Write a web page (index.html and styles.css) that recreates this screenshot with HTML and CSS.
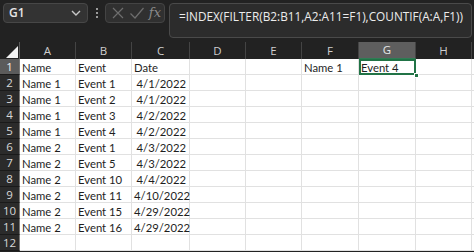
FILE: index.html
```html
<!DOCTYPE html>
<html>
<head>
<meta charset="utf-8">
<link rel="stylesheet" href="styles.css">
</head>
<body>
<div class="app">
  <div class="topbar">
    <div class="namebox">
      <span class="ref">G1</span>
      <svg class="chev" width="10" height="6" viewBox="0 0 10 6"><path d="M1 1 L5 5 L9 1" fill="none" stroke="#c8c8c8" stroke-width="1.4"/></svg>
    </div>
    <div class="dots"><i></i><i></i><i></i></div>
    <div class="btnbox">
      <svg width="14" height="14" viewBox="0 0 14 14"><path d="M2 2 L12 12 M12 2 L2 12" stroke="#6e6e6e" stroke-width="1.2" fill="none"/></svg>
      <svg width="16" height="14" viewBox="0 0 16 14"><path d="M1.5 7.5 L6 12 L14.5 2" stroke="#6e6e6e" stroke-width="1.2" fill="none"/></svg>
      <span class="fx">fx</span>
    </div>
    <div class="formula">=INDEX(FILTER(B2:B11,A2:A11=F1),COUNTIF(A:A,F1))</div>
  </div>
  <div class="sheet">
    <div class="corner"><svg width="12" height="12" viewBox="0 0 12 12"><path d="M12 0 L12 12 L0 12 Z" fill="#f2f2f2"/></svg></div>
    <div class="ch">A</div><div class="ch">B</div><div class="ch">C</div><div class="ch">D</div><div class="ch">E</div><div class="ch">F</div><div class="ch sel">G</div><div class="ch">H</div><div class="ch rest"></div>

    <div class="rh sel">1</div><div class="c">Name</div><div class="c">Event</div><div class="c">Date</div><div class="c"></div><div class="c"></div><div class="c">Name 1</div><div class="c active">Event 4</div><div class="c"></div><div class="c"></div>
    <div class="rh">2</div><div class="c">Name 1</div><div class="c">Event 1</div><div class="c r">4/1/2022</div><div class="c"></div><div class="c"></div><div class="c"></div><div class="c"></div><div class="c"></div><div class="c"></div>
    <div class="rh">3</div><div class="c">Name 1</div><div class="c">Event 2</div><div class="c r">4/1/2022</div><div class="c"></div><div class="c"></div><div class="c"></div><div class="c"></div><div class="c"></div><div class="c"></div>
    <div class="rh">4</div><div class="c">Name 1</div><div class="c">Event 3</div><div class="c r">4/2/2022</div><div class="c"></div><div class="c"></div><div class="c"></div><div class="c"></div><div class="c"></div><div class="c"></div>
    <div class="rh">5</div><div class="c">Name 1</div><div class="c">Event 4</div><div class="c r">4/2/2022</div><div class="c"></div><div class="c"></div><div class="c"></div><div class="c"></div><div class="c"></div><div class="c"></div>
    <div class="rh">6</div><div class="c">Name 2</div><div class="c">Event 1</div><div class="c r">4/3/2022</div><div class="c"></div><div class="c"></div><div class="c"></div><div class="c"></div><div class="c"></div><div class="c"></div>
    <div class="rh">7</div><div class="c">Name 2</div><div class="c">Event 5</div><div class="c r">4/3/2022</div><div class="c"></div><div class="c"></div><div class="c"></div><div class="c"></div><div class="c"></div><div class="c"></div>
    <div class="rh">8</div><div class="c">Name 2</div><div class="c">Event 10</div><div class="c r">4/4/2022</div><div class="c"></div><div class="c"></div><div class="c"></div><div class="c"></div><div class="c"></div><div class="c"></div>
    <div class="rh">9</div><div class="c">Name 2</div><div class="c">Event 11</div><div class="c r">4/10/2022</div><div class="c"></div><div class="c"></div><div class="c"></div><div class="c"></div><div class="c"></div><div class="c"></div>
    <div class="rh">10</div><div class="c">Name 2</div><div class="c">Event 15</div><div class="c r">4/29/2022</div><div class="c"></div><div class="c"></div><div class="c"></div><div class="c"></div><div class="c"></div><div class="c"></div>
    <div class="rh">11</div><div class="c">Name 2</div><div class="c">Event 16</div><div class="c r">4/29/2022</div><div class="c"></div><div class="c"></div><div class="c"></div><div class="c"></div><div class="c"></div><div class="c"></div>
    <div class="rh">12</div><div class="c"></div><div class="c"></div><div class="c"></div><div class="c"></div><div class="c"></div><div class="c"></div><div class="c"></div><div class="c"></div><div class="c"></div>
  </div>
</div>
</body>
</html>
```
FILE: styles.css
```css
html, body {
  margin: 0;
  padding: 0;
  background: #222222;
  overflow: hidden;
}
.app {
  width: 474px;
  height: 252px;
  display: flex;
  flex-direction: column;
  font-family: "Open Sans", "Noto Sans", sans-serif;
}
.topbar {
  height: 42px;
  box-sizing: border-box;
  padding: 3px 2px 0 3px;
  display: flex;
  align-items: flex-start;
}
.namebox {
  width: 85px;
  height: 20px;
  box-sizing: border-box;
  background: #333333;
  border: 1px solid #474747;
  border-radius: 4px;
  display: flex;
  align-items: center;
  justify-content: space-between;
  padding: 0 6px 0 5px;
  color: #e6e6e6;
  font-size: 12px;
  font-weight: 600;
}
.namebox .ref { line-height: 18px; }
.dots {
  width: 17px;
  height: 20px;
  display: flex;
  flex-direction: column;
  align-items: center;
  justify-content: center;
  gap: 2px;
}
.dots i {
  display: block;
  width: 2px;
  height: 2px;
  background: #9a9a9a;
}
.btnbox {
  width: 60px;
  height: 20px;
  box-sizing: border-box;
  background: #303030;
  border: 1px solid #444444;
  border-radius: 4px;
  display: flex;
  align-items: center;
  justify-content: space-between;
  padding: 0 3px 0 5px;
}
.fx {
  font-family: "DejaVu Serif", "Liberation Serif", serif;
  font-style: italic;
  font-size: 13px;
  color: #8a8a8a;
  line-height: 18px;
}
.formula {
  margin-left: 4px;
  flex: 1;
  height: 35px;
  box-sizing: border-box;
  background: #2c2c2c;
  border: 1px solid #4a4a4a;
  border-radius: 4px;
  color: #ececec;
  font-size: 11.8px;
  padding: 3px 0 0 9px;
  line-height: 18px;
  white-space: nowrap;
  overflow: hidden;
}
.sheet {
  display: grid;
  grid-template-columns: 20px 56px 56px 58px 56px 56px 57px 57px 56px 1fr;
  grid-template-rows: 17px repeat(12, 16px);
  font-family: "Lato", "Open Sans", sans-serif;
}
.corner {
  background: #222222;
  border-right: 1px solid #5a5a5a;
  box-sizing: border-box;
  display: flex;
  align-items: flex-end;
  justify-content: flex-end;
  padding: 0 1px 1px 0;
}
.ch {
  background: #222222;
  color: #cfcfcf;
  font-family: "Open Sans", sans-serif;
  font-size: 11.5px;
  text-align: center;
  line-height: 17px;
  border-right: 1px solid #444444;
  box-sizing: border-box;
}
.ch.sel {
  background: #5e5e5e;
  color: #e8e8e8;
  border-bottom: 1px solid #2f7d55;
  line-height: 16px;
}
.ch.rest { border-right: none; }
.rh {
  background: #2b2b2b;
  color: #d8d8d8;
  font-family: "Open Sans", sans-serif;
  font-size: 11.5px;
  text-align: center;
  line-height: 15px;
  border-bottom: 1px solid #1a1a1a;
  border-right: 1px solid #777777;
  box-sizing: border-box;
}
.rh.sel {
  background: #5b5b5b;
  color: #eeeeee;
}
.c {
  background: #ffffff;
  color: #1e1e1e;
  font-size: 11.3px;
  line-height: 15px;
  padding: 1px 2px 0;
  border-right: 1px solid #e1e1e1;
  border-bottom: 1px solid #e1e1e1;
  box-sizing: border-box;
  white-space: nowrap;
}
.c.r { text-align: right; padding-right: 3px; }
.c.active {
  position: relative;
  outline: 2px solid #217346;
  outline-offset: -2px;
  border: none;
}
.c.active::after {
  content: "";
  position: absolute;
  right: -3px;
  bottom: -3px;
  width: 5px;
  height: 5px;
  background: #217346;
  border: 1px solid #ffffff;
  box-sizing: border-box;
}
```
